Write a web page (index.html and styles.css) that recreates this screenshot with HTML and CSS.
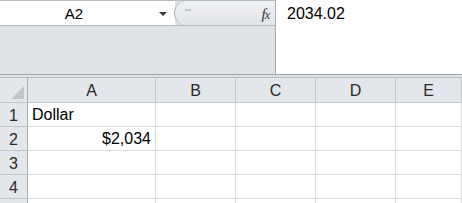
FILE: index.html
```
<!DOCTYPE html>
<html lang="en">
<head>
    <meta charset="UTF-8">
    <title>Sheet</title>
    <link rel="stylesheet" href="styles.css">
</head>
<body>
    <!-- formula bar -->
    <div class="toolbar">
        <div class="toolbar-left">
            <div class="name-row">
                <div class="namebox">
                    <span class="namebox-text">A2</span>
                    <span class="dropdown"></span>
                </div>
                <div class="fx-pill">
                    <span class="grip"></span>
                    <span class="fx">f<span class="fx-x">x</span></span>
                </div>
            </div>
        </div>
        <div class="formula-input">2034.02</div>
    </div>

    <!-- sheet grid -->
    <div class="sheet">
        <div class="hdr corner"><span class="corner-tri"></span></div>
        <div class="hdr col">A</div>
        <div class="hdr col">B</div>
        <div class="hdr col">C</div>
        <div class="hdr col">D</div>
        <div class="hdr col">E</div>

        <div class="hdr row">1</div>
        <div class="cell">Dollar</div>
        <div class="cell"></div><div class="cell"></div><div class="cell"></div><div class="cell"></div>

        <div class="hdr row">2</div>
        <div class="cell num">$2,034</div>
        <div class="cell"></div><div class="cell"></div><div class="cell"></div><div class="cell"></div>

        <div class="hdr row">3</div>
        <div class="cell"></div><div class="cell"></div><div class="cell"></div><div class="cell"></div><div class="cell"></div>

        <div class="hdr row">4</div>
        <div class="cell"></div><div class="cell"></div><div class="cell"></div><div class="cell"></div><div class="cell"></div>

        <!-- row 5 is only a sliver at the bottom edge -->
        <div class="hdr row"></div>
        <div class="cell"></div><div class="cell"></div><div class="cell"></div><div class="cell"></div><div class="cell"></div>
    </div>
</body>
</html>
```

FILE: styles.css
```
/* page */
body {
    margin: 0;
    width: 462px;
    height: 203px;
    overflow: hidden;
    background: #dfe3e8;
    font-family: "Liberation Sans", Arial, sans-serif;
    color: #000;
}

/* formula bar */
.toolbar {
    display: flex;
    height: 74px;
    border-bottom: 1px solid #9ea4ab;
    background: #dfe3e8;
}
.toolbar-left {
    width: 275px;
    flex: none;
}
.name-row {
    display: flex;
    height: 26px;
    border-top: 1px solid #b5bac0;
    border-bottom: 1px solid #b5bac0;
    box-sizing: border-box;
}
.namebox {
    width: 175px;
    flex: none;
    background: #fff;
    display: flex;
    align-items: center;
}
.namebox-text {
    width: 148px;
    text-align: center;
    font-size: 15px;
    padding-top: 1px;
}
.dropdown {
    width: 0;
    height: 0;
    border-left: 4px solid transparent;
    border-right: 4px solid transparent;
    border-top: 4px solid #3a3a3a;
    margin-left: 11px;
    margin-top: 2px;
}
.fx-pill {
    flex: 1;
    display: flex;
    align-items: center;
    justify-content: space-between;
    margin-left: -1px;
    border-left: 1px solid #a9aeb5;
    border-radius: 13px 0 0 13px;
    background: linear-gradient(#eef0f2, #e2e5e9);
    padding: 0 6px 0 10px;
}
.grip {
    width: 6px;
    height: 2px;
    background: #c6cacf;
    margin-top: -6px;
}
.fx {
    font-family: "Liberation Serif", "Times New Roman", serif;
    font-style: italic;
    font-size: 15px;
    color: #333;
    letter-spacing: -1px;
    padding-top: 2px;
}
.fx-x {
    font-size: 12px;
}
.formula-input {
    flex: 1;
    background: #fff;
    border-left: 1px solid #a9aeb5;
    padding: 5px 0 0 11px;
    font-size: 16px;
}

/* grid */
.sheet {
    margin-top: 2px;
    border-top: 1px solid #b8bcc1;
    display: grid;
    grid-template-columns: 28px 128px 80px 80px 80px 1fr;
    grid-template-rows: 25px repeat(5, 24px);
    background: #fff;
}
.hdr {
    background: #e3e6eb;
    color: #2a2a2a;
    font-size: 16px;
    display: flex;
    align-items: center;
    justify-content: center;
    box-sizing: border-box;
    border-right: 1px solid #c3c7cc;
    border-bottom: 1px solid #c3c7cc;
}
.hdr.col {
    padding-top: 1px;
}
.hdr.row {
    padding-top: 2px;
    border-right-color: #a9aeb5;
}
.corner {
    position: relative;
    border-right-color: #a9aeb5;
}
.corner-tri {
    position: absolute;
    right: 3px;
    bottom: 3px;
    width: 0;
    height: 0;
    border-left: 13px solid transparent;
    border-bottom: 13px solid #c3c7cc;
}
.cell {
    box-sizing: border-box;
    border-right: 1px solid #d9dbde;
    border-bottom: 1px solid #d9dbde;
    font-size: 16px;
    padding: 3px 4px 0 4px;
    white-space: nowrap;
}
.cell.num {
    text-align: right;
}
```
